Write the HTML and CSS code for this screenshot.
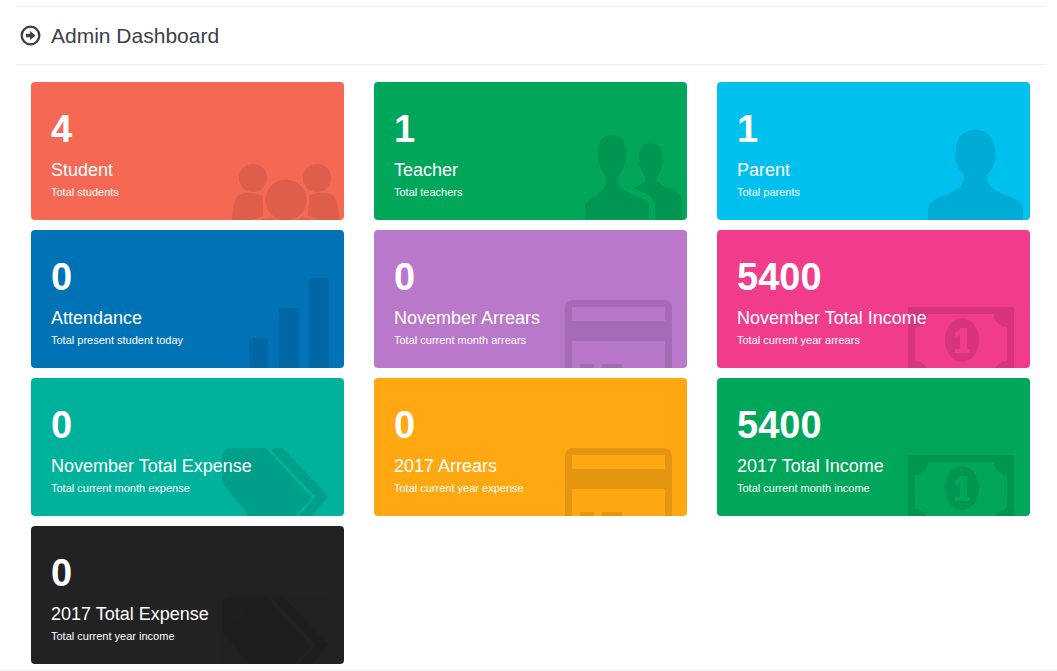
FILE: index.html
```html
<!DOCTYPE html>
<html lang="en">
<head>
    <meta charset="UTF-8">
    <title>Admin Dashboard</title>
    <link rel="stylesheet" href="styles.css">
</head>
<body>
    <svg class="icon-defs" aria-hidden="true">
        <defs>
            <symbol id="person" viewBox="0 0 95 90">
                <path d="M47 0C61 0 67 9 67 21C67 25 69 27 67 31C65 37 63 41 59 45L59 50C61 58 70 62 80 66C88 69 95 72 95 80L95 90L0 90L0 80C0 72 7 69 15 66C25 62 34 58 36 50L36 45C32 41 30 37 28 31C26 27 28 25 28 21C28 9 33 0 47 0Z"/>
            </symbol>
            <g id="card-icon">
                <rect x="191" y="70" width="107" height="80" rx="8"/>
                <rect class="cut" x="198" y="77" width="93" height="14"/>
                <rect class="cut" x="198" y="111" width="93" height="40"/>
                <rect x="206" y="134" width="14" height="6"/>
                <rect x="228" y="134" width="20" height="6"/>
            </g>
            <g id="money-icon">
                <rect x="191" y="77" width="106" height="70"/>
                <rect class="cut" x="198" y="84" width="92" height="60"/>
                <path d="M198 84h13a13 13 0 0 1-13 13z"/>
                <path d="M290 84h-13a13 13 0 0 0 13 13z"/>
                <path d="M198 144v-13a13 13 0 0 1 13 13z"/>
                <path d="M290 144v-13a13 13 0 0 0-13 13z"/>
                <ellipse cx="245" cy="110" rx="17" ry="22"/>
                <path class="cut" d="M244 98h6v21h3v4h-15v-4h5v-14l-5 2v-4z"/>
            </g>
            <g id="tag-icon" class="tag">
                <path d="M201 72H234L278 120L259 140H222L193 104V80Q193 72 201 72Z"/>
                <path d="M243 72H251L295 119L276 140H269L287 119Z"/>
            </g>
        </defs>
    </svg>

    <div class="page">
        <div class="page-header">
            <svg class="header-icon" viewBox="0 0 20 20">
                <circle cx="10" cy="10" r="8.4"/>
                <path class="arrow" d="M5.6 8.3H9.6V5.6L14.8 10L9.6 14.4V11.7H5.6Z"/>
            </svg>
            <h1>Admin Dashboard</h1>
        </div>

        <div class="card-grid">
            <div class="card red">
                <svg class="card-art" viewBox="0 0 313 138">
                    <circle cx="222" cy="96" r="14"/>
                    <circle cx="286" cy="96" r="14"/>
                    <path d="M201 140C201 128 202 117 208 113C214 110 224 110 232 114L232 140Z"/>
                    <path d="M308 140C308 128 307 117 301 113C295 110 285 110 277 114L277 140Z"/>
                    <path class="gap" d="M221 140C235 131 275 131 289 140Z"/>
                    <circle class="gap" cx="255" cy="118" r="22"/>
                </svg>
                <div class="card-num">4</div>
                <div class="card-title">Student</div>
                <div class="card-sub">Total students</div>
            </div>
            <div class="card green">
                <svg class="card-art" viewBox="0 0 313 138">
                    <path d="M277 61C286 61 289 68 289 76C289 80 290 82 288 84C287 89 285 92 283 95L283 99C286 103 296 106 302 109C306 111 308 113 308 118L308 140L250 140L250 110C258 106 268 103 271 99L271 95C269 92 267 89 266 84C264 82 265 80 265 76C265 68 268 61 277 61Z"/>
                    <path class="gap wide" d="M238 50C250 50 255 59 255 71C255 75 256 78 254 81C252 88 250 92 247 96L247 101C251 107 262 111 270 114C275 116 278 119 278 124L278 140L208 140L208 124C208 119 212 116 216 114C222 111 227 107 229 101L229 96C226 92 224 88 222 81C220 78 221 75 221 71C221 59 226 50 238 50Z"/>
                </svg>
                <div class="card-num">1</div>
                <div class="card-title">Teacher</div>
                <div class="card-sub">Total teachers</div>
            </div>
            <div class="card sky">
                <svg class="card-art" viewBox="0 0 313 138">
                    <use href="#person" x="211" y="48" width="95" height="90"/>
                </svg>
                <div class="card-num">1</div>
                <div class="card-title">Parent</div>
                <div class="card-sub">Total parents</div>
            </div>

            <div class="card blue">
                <svg class="card-art" viewBox="0 0 313 138">
                    <rect x="218" y="108" width="19" height="34" rx="3"/>
                    <rect x="248" y="78" width="20" height="64" rx="3"/>
                    <rect x="278" y="48" width="20" height="94" rx="3"/>
                </svg>
                <div class="card-num">0</div>
                <div class="card-title">Attendance</div>
                <div class="card-sub">Total present student today</div>
            </div>
            <div class="card purple">
                <svg class="card-art" viewBox="0 0 313 138"><use href="#card-icon"/></svg>
                <div class="card-num">0</div>
                <div class="card-title">November Arrears</div>
                <div class="card-sub">Total current month arrears</div>
            </div>
            <div class="card pink">
                <svg class="card-art" viewBox="0 0 313 138"><use href="#money-icon"/></svg>
                <div class="card-num">5400</div>
                <div class="card-title">November Total Income</div>
                <div class="card-sub">Total current year arrears</div>
            </div>

            <div class="card teal">
                <svg class="card-art" viewBox="0 0 313 138"><use href="#tag-icon"/></svg>
                <div class="card-num">0</div>
                <div class="card-title">November Total Expense</div>
                <div class="card-sub">Total current month expense</div>
            </div>
            <div class="card orange">
                <svg class="card-art" viewBox="0 0 313 138"><use href="#card-icon"/></svg>
                <div class="card-num">0</div>
                <div class="card-title">2017 Arrears</div>
                <div class="card-sub">Total current year expense</div>
            </div>
            <div class="card green">
                <svg class="card-art" viewBox="0 0 313 138"><use href="#money-icon"/></svg>
                <div class="card-num">5400</div>
                <div class="card-title">2017 Total Income</div>
                <div class="card-sub">Total current month income</div>
            </div>

            <div class="card black">
                <svg class="card-art" viewBox="0 0 313 138">
                    <use href="#tag-icon"/>
                    <circle class="cut hole" cx="208" cy="87" r="7"/>
                </svg>
                <div class="card-num">0</div>
                <div class="card-title">2017 Total Expense</div>
                <div class="card-sub">Total current year income</div>
            </div>
        </div>
    </div>
    <div class="page-footer"></div>
</body>
</html>
```

FILE: styles.css
```css
body {
    margin: 0;
    background: #fff;
    font-family: "Liberation Sans", Arial, sans-serif;
    color: #333;
}

.icon-defs {
    position: absolute;
    width: 0;
    height: 0;
}

.page {
    padding: 6px 12px 0 16px;
}

.page-header {
    display: flex;
    align-items: center;
    gap: 10px;
    height: 57px;
    padding-left: 4px;
    border-top: 1px solid #eee;
    border-bottom: 1px solid #eee;
}

.page-header h1 {
    margin: 0;
    padding-top: 1px;
    font-size: 21px;
    font-weight: 400;
    color: #3a4148;
}

.header-icon {
    width: 21px;
    height: 21px;
    fill: none;
    stroke: #3a4148;
    stroke-width: 2.2;
}

.header-icon .arrow {
    fill: #3a4148;
    stroke: none;
}

.card-grid {
    display: grid;
    grid-template-columns: repeat(3, 1fr);
    column-gap: 30px;
    row-gap: 10px;
    padding: 17px 15px 0;
}

.card {
    position: relative;
    overflow: hidden;
    height: 138px;
    box-sizing: border-box;
    padding: 20px;
    border-radius: 4px;
    background: var(--card);
    color: #fff;
}

/* the faded picture in the corner of each card */
.card-art {
    position: absolute;
    top: 0;
    left: 0;
    width: 100%;
    height: 100%;
    opacity: 0.1;
    fill: #000;
}

.card-art .cut,
#card-icon .cut,
#money-icon .cut {
    fill: var(--card);
}

.card-art .gap {
    stroke: var(--card);
    stroke-width: 3;
}

.card-art .wide {
    stroke-width: 6;
}

.card-art .hole {
    fill-opacity: 0.5;
}

.tag {
    stroke: #000;
    stroke-width: 4;
    stroke-linejoin: round;
}

.card-num,
.card-title,
.card-sub {
    position: relative;
}

.card-num {
    font-size: 38px;
    font-weight: 700;
    line-height: 54px;
}

.card-title {
    margin-top: 4px;
    font-size: 18px;
    line-height: 20px;
}

.card-sub {
    margin-top: 5px;
    font-size: 11px;
    line-height: 14px;
}

.page-footer {
    height: 2px;
    margin-top: 5px;
    background: #f9f9f9;
}

.red { --card: #f56954; }
.green { --card: #00a65a; }
.sky { --card: #00c0ef; }
.blue { --card: #0073b7; }
.purple { --card: #b978ca; }
.pink { --card: #f03c8a; }
.teal { --card: #00b29b; }
.orange { --card: #ffa812; }
.black { --card: #222; }
```
